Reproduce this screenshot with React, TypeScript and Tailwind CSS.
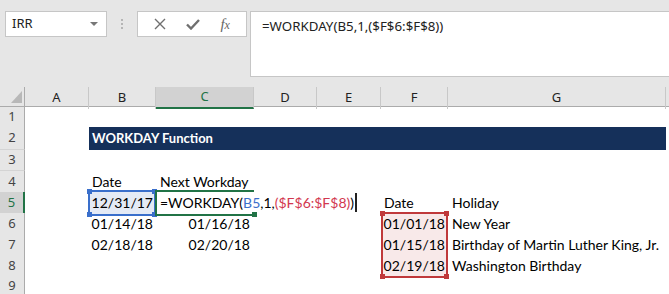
import React from 'react';

const GRID = 'grid grid-cols-[25px_64px_67px_98px_63px_64px_67px_218px_1fr]';
const UI = "font-['Noto_Sans',sans-serif]";
const CELL = "font-['Lato',sans-serif] text-[14px] text-black";

function RowHead({ n, active = false }: { n: number; active?: boolean }) {
  return (
    <div
      className={`flex items-center justify-center border-b border-[#d4d4d4] text-[13px] ${UI} ${
        active
          ? 'bg-[#d2d2d2] text-[#217346] border-r-2 border-r-[#217346]'
          : 'bg-[#e6e6e6] text-[#444] border-r border-r-[#ababab]'
      }`}
    >
      {n}
    </div>
  );
}

function Corner({ className }: { className: string }) {
  return <span className={`absolute w-[5px] h-[5px] ${className}`} />;
}

export default function App() {
  return (
    <main className="w-[669px] h-[294px] overflow-hidden bg-white">
      {/* Formula bar area */}
      <div className="h-[87px] bg-[#e6e6e6] pt-[11px] flex items-start">
        <div className={`ml-[5px] w-[102px] h-[26px] bg-white border border-[#c6c6c6] flex items-center justify-between pl-[6px] pr-[8px] ${UI} text-[13px] text-[#222]`}>
          <span>IRR</span>
          <span className="w-0 h-0 border-l-[4px] border-r-[4px] border-t-[4px] border-l-transparent border-r-transparent border-t-[#777]" />
        </div>
        <div className="w-[30px] h-[26px] flex flex-col items-center justify-center gap-[2px]">
          <span className="w-[2px] h-[2px] bg-[#b5b5b5]" />
          <span className="w-[2px] h-[2px] bg-[#b5b5b5]" />
          <span className="w-[2px] h-[2px] bg-[#b5b5b5]" />
        </div>
        <div className="w-[110px] h-[26px] bg-white border border-[#c6c6c6] flex items-center justify-around px-[6px]">
          <svg width="12" height="12" viewBox="0 0 12 12">
            <path d="M1 1L11 11M11 1L1 11" stroke="#6f6f6f" strokeWidth="1.4" fill="none" />
          </svg>
          <svg width="14" height="12" viewBox="0 0 14 12">
            <path d="M1 6.5L5 10.5L13 2" stroke="#6f6f6f" strokeWidth="2.4" fill="none" />
          </svg>
          <span className="font-['Liberation_Serif',serif] italic text-[15px] text-[#666] leading-none">
            f<span className="text-[12px]">x</span>
          </span>
        </div>
        <div className={`ml-[3px] flex-1 h-[66px] bg-white border border-r-0 border-[#c6c6c6] pl-[11px] pt-[5px] ${UI} text-[13.3px] text-[#222]`}>
          =WORKDAY(B5,1,($F$6:$F$8))
        </div>
      </div>

      {/* Column headers */}
      <div className={`${GRID} h-[20px] bg-[#e6e6e6] border-b border-[#ababab] ${UI} text-[13px] text-[#222]`}>
        <div className="relative border-r border-[#ababab]">
          <svg className="absolute left-[11px] top-[4px]" width="11" height="12" viewBox="0 0 11 12">
            <path d="M11 0V12H0Z" fill="#b8b8b8" />
          </svg>
        </div>
        {['A', 'B', 'C', 'D', 'E', 'F', 'G'].map((c) => (
          <div
            key={c}
            className={`flex items-center justify-center border-r border-[#c8c8c8] ${
              c === 'C' ? 'bg-[#d2d2d2] text-[#217346] border-b-2 border-b-[#217346]' : ''
            }`}
          >
            {c}
          </div>
        ))}
        <div />
      </div>

      {/* Row 1 */}
      <div className={`${GRID} h-[20px]`}>
        <RowHead n={1} />
      </div>

      {/* Row 2 */}
      <div className={`${GRID} h-[23px]`}>
        <RowHead n={2} />
        <div />
        <div className="col-span-6 bg-[#15305a] flex items-center pl-[3px] pt-[1px] font-['Lato',sans-serif] font-bold text-[13px] text-white">
          WORKDAY Function
        </div>
      </div>

      {/* Row 3 */}
      <div className={`${GRID} h-[21px]`}>
        <RowHead n={3} />
      </div>

      {/* Row 4 */}
      <div className={`${GRID} h-[21px] ${CELL}`}>
        <RowHead n={4} />
        <div />
        <div className="flex items-end pl-[3px] pb-[2px]">Date</div>
        <div className="flex items-end pl-[4px] pb-[2px]">Next Workday</div>
      </div>

      {/* Row 5 */}
      <div className={`${GRID} h-[21px] ${CELL}`}>
        <RowHead n={5} active />
        <div />
        <div className="relative bg-[#e4eaf5] flex items-end justify-end pr-[3px] pb-[2px]">
          12/31/17
          <div className="absolute left-[-1px] right-0 top-[-2px] bottom-[-1px] border-2 border-[#3a6fcb]">
            <Corner className="bg-[#3a6fcb] left-[-3px] top-[-3px]" />
            <Corner className="bg-[#3a6fcb] right-[-3px] top-[-3px]" />
            <Corner className="bg-[#3a6fcb] left-[-3px] bottom-[-3px]" />
            <Corner className="bg-[#3a6fcb] right-[-3px] bottom-[-3px]" />
          </div>
        </div>
        <div className="relative flex items-end pl-[4px] pb-[2px] whitespace-nowrap">
          <span className="relative z-10">
            =WORKDAY(<span className="text-[#3a6fcb]">B5</span>,1,
            <span className="text-[#d2384f]">($F$6:$F$8)</span>)
          </span>
          <span className="absolute left-[199px] top-[1px] w-[2px] h-[19px] bg-[#222]" />
          <div className="absolute left-[-1px] right-0 top-[-2px] bottom-[-1px] border-2 border-r-0 border-[#217346]">
            <Corner className="bg-[#217346] right-[-3px] bottom-[-3px]" />
          </div>
        </div>
        <div />
        <div />
        <div className="flex items-end pl-[3px] pb-[2px]">Date</div>
        <div className="flex items-end pl-[4px] pb-[2px]">Holiday</div>
      </div>

      {/* Rows 6-8 */}
      {[
        { n: 6, b: '01/14/18', c: '01/16/18', f: '01/01/18', g: 'New Year' },
        { n: 7, b: '02/18/18', c: '02/20/18', f: '01/15/18', g: 'Birthday of Martin Luther King, Jr.' },
        { n: 8, b: '', c: '', f: '02/19/18', g: 'Washington Birthday' },
      ].map((r) => (
        <div key={r.n} className={`${GRID} h-[21px] ${CELL}`}>
          <RowHead n={r.n} />
          <div />
          <div className="flex items-end justify-end pr-[3px] pb-[2px]">{r.b}</div>
          <div className="flex items-end justify-end pr-[4px] pb-[2px]">{r.c}</div>
          <div />
          <div />
          <div className="relative bg-[#f8e9e9] flex items-end justify-end pr-[3px] pb-[2px]">
            {r.f}
            <div
              className={`absolute left-0 right-0 top-0 bottom-0 border-x-2 border-[#c0393b] ${
                r.n === 6 ? 'border-t-2 top-[-1px]' : ''
              } ${r.n === 8 ? 'border-b-2' : ''}`}
            >
              {r.n === 6 && (
                <>
                  <Corner className="bg-[#c0393b] left-[-3px] top-[-3px]" />
                  <Corner className="bg-[#c0393b] right-[-3px] top-[-3px]" />
                </>
              )}
              {r.n === 8 && (
                <>
                  <Corner className="bg-[#c0393b] left-[-3px] bottom-[-3px]" />
                  <Corner className="bg-[#c0393b] right-[-3px] bottom-[-3px]" />
                </>
              )}
            </div>
          </div>
          <div className="flex items-end pl-[4px] pb-[2px] whitespace-nowrap">{r.g}</div>
        </div>
      ))}

      {/* Row 9 */}
      <div className={`${GRID} h-[21px]`}>
        <RowHead n={9} />
      </div>
    </main>
  );
}
